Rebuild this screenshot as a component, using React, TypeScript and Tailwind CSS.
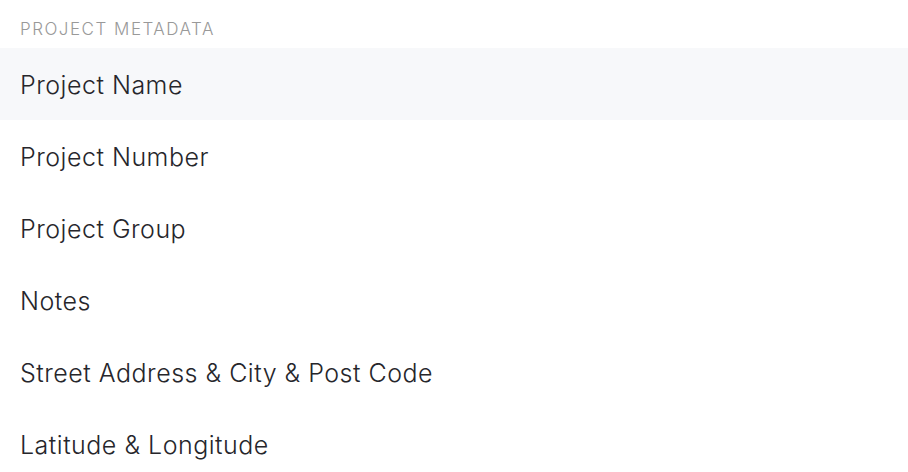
import React from "react";

const items = [
  "Project Name",
  "Project Number",
  "Project Group",
  "Notes",
  "Street Address & City & Post Code",
  "Latitude & Longitude",
];

export default function App() {
  return (
    <div className="w-[908px] h-[472px] overflow-hidden bg-white" style={{ fontFamily: "Inter, 'Open Sans', sans-serif" }}>
      <div className="h-[48px] flex items-center pl-5 pt-[11px] text-[17px] font-light text-[#999999] uppercase tracking-[1.5px]">
        Project Metadata
      </div>
      {items.map((t, i) => (
        <div
          key={t}
          className={`h-[72px] flex items-center pl-5 pt-[3px] text-[25px] font-light tracking-[0.5px] text-[#26262b] ${i === 0 ? "bg-[#f7f8fa]" : ""}`}
        >
          {t}
        </div>
      ))}
    </div>
  );
}
